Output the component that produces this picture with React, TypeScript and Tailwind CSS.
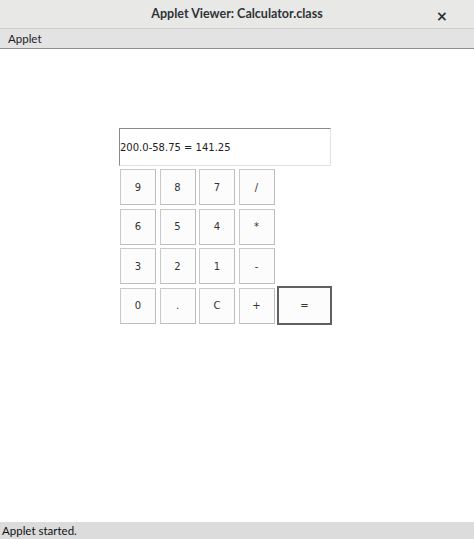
const rows: string[][] = [
  ['9', '8', '7', '/'],
  ['6', '5', '4', '*'],
  ['3', '2', '1', '-'],
  ['0', '.', 'C', '+'],
]

function Key({ label }: { label: string }) {
  return (
    <button className="w-[36px] h-[36px] bg-[#fcfcfc] border border-[#c9c9c9] border-r-[#bdbdbd] border-b-[#bdbdbd] text-[10px] text-[#333] font-['DejaVu_Sans',sans-serif] flex items-center justify-center">
      {label}
    </button>
  )
}

export default function App() {
  return (
    <div className="w-[474px] h-[539px] flex flex-col bg-white font-['DejaVu_Sans',sans-serif] overflow-hidden">
      <div className="h-[29px] shrink-0 bg-[#e8e8e7] border-b border-[#cfcfcd] flex items-center relative">
        <div className="flex-1 text-center text-[12.5px] font-bold text-[#2e3436] font-['Lato',sans-serif]">
          Applet Viewer: Calculator.class
        </div>
        <span className="absolute left-[436px] top-[6px] text-[14px] font-bold text-[#2e3436]">×</span>
      </div>
      <div className="h-[20px] shrink-0 bg-[#e3e3e3] border-b border-[#8e8e8e] flex items-center pl-[8px] text-[11.5px] text-[#222] font-['Lato',sans-serif]">
        Applet
      </div>
      <div className="flex-1 relative">
        <div className="pt-[79px] pl-[119px]">
          <div className="w-[212px] h-[38px] bg-white border border-[#e2e2e2] border-l-[#8a8a8a] border-t-[#8a8a8a] flex items-center text-[10px] text-[#222]">
            200.0-58.75 = 141.25
          </div>
          <div className="flex flex-col gap-[3.5px] mt-[3px] ml-[1px]">
            {rows.map((row, i) => (
              <div key={i} className="flex items-center gap-[3.5px] h-[36px]">
                {row.map((k) => (
                  <Key key={k} label={k} />
                ))}
                {i === 3 && (
                  <button className="w-[55px] h-[39px] ml-[-1px] bg-[#fcfcfc] border-2 border-[#606060] text-[10px] text-[#333] flex items-center justify-center">
                    =
                  </button>
                )}
              </div>
            ))}
          </div>
        </div>
      </div>
      <div className="h-[17px] shrink-0 bg-[#dcdcdc] flex items-center pl-[2px] text-[11.5px] text-[#111] font-['Lato',sans-serif]">
        Applet started.
      </div>
    </div>
  )
}
